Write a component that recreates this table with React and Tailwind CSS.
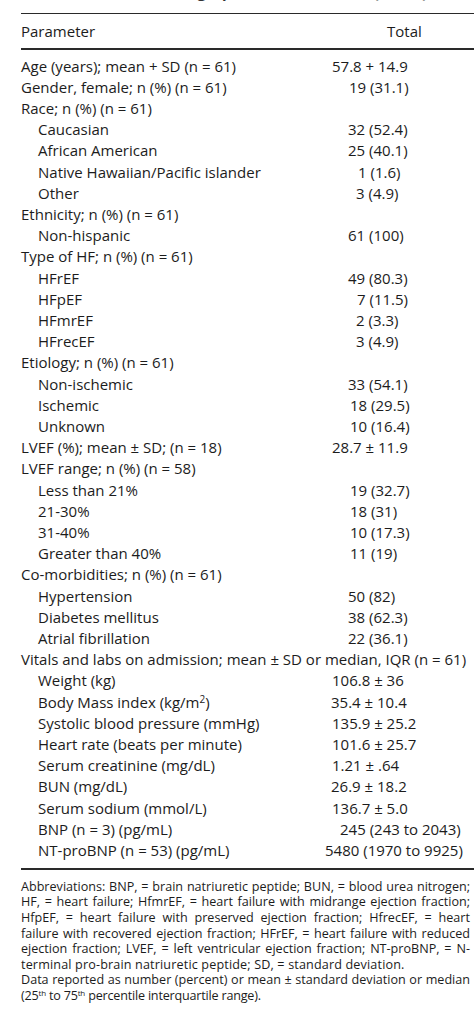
const rows = [
  { label: 'Age (years); mean + SD (n = 61)', value: '57.8 + 14.9', pad: 'pl-[32px]' },
  { label: 'Gender, female; n (%) (n = 61)', value: '19 (31.1)', pad: 'pl-[49px]' },
  { label: 'Race; n (%) (n = 61)' },
  { label: 'Caucasian', sub: true, value: '32 (52.4)', pad: 'pl-[48px]' },
  { label: 'African American', sub: true, value: '25 (40.1)', pad: 'pl-[48px]' },
  { label: 'Native Hawaiian/Pacific islander', sub: true, value: '1 (1.6)', pad: 'pl-[58px]' },
  { label: 'Other', sub: true, value: '3 (4.9)', pad: 'pl-[56px]' },
  { label: 'Ethnicity; n (%) (n = 61)' },
  { label: 'Non-hispanic', sub: true, value: '61 (100)', pad: 'pl-[48px]' },
  { label: 'Type of HF; n (%) (n = 61)' },
  { label: 'HFrEF', sub: true, value: '49 (80.3)', pad: 'pl-[48px]' },
  { label: 'HFpEF', sub: true, value: '7 (11.5)', pad: 'pl-[57px]' },
  { label: 'HFmrEF', sub: true, value: '2 (3.3)', pad: 'pl-[56px]' },
  { label: 'HFrecEF', sub: true, value: '3 (4.9)', pad: 'pl-[56px]' },
  { label: 'Etiology; n (%) (n = 61)' },
  { label: 'Non-ischemic', sub: true, value: '33 (54.1)', pad: 'pl-[48px]' },
  { label: 'Ischemic', sub: true, value: '18 (29.5)', pad: 'pl-[50px]' },
  { label: 'Unknown', sub: true, value: '10 (16.4)', pad: 'pl-[50px]' },
  { label: 'LVEF (%); mean ± SD; (n = 18)', value: '28.7 ± 11.9', pad: 'pl-[32px]' },
  { label: 'LVEF range; n (%) (n = 58)' },
  { label: 'Less than 21%', sub: true, value: '19 (32.7)', pad: 'pl-[50px]' },
  { label: '21-30%', sub: true, value: '18 (31)', pad: 'pl-[50px]' },
  { label: '31-40%', sub: true, value: '10 (17.3)', pad: 'pl-[50px]' },
  { label: 'Greater than 40%', sub: true, value: '11 (19)', pad: 'pl-[50px]' },
  { label: 'Co-morbidities; n (%) (n = 61)' },
  { label: 'Hypertension', sub: true, value: '50 (82)', pad: 'pl-[48px]' },
  { label: 'Diabetes mellitus', sub: true, value: '38 (62.3)', pad: 'pl-[48px]' },
  { label: 'Atrial fibrillation', sub: true, value: '22 (36.1)', pad: 'pl-[48px]' },
  { label: 'Vitals and labs on admission; mean ± SD or median, IQR (n = 61)', wide: true },
  { label: 'Weight (kg)', sub: true, value: '106.8 ± 36', pad: 'pl-[32px]' },
  { label: 'Body Mass index (kg/m²)', sub: true, value: '35.4 ± 10.4', pad: 'pl-[31px]', sup: true },
  { label: 'Systolic blood pressure (mmHg)', sub: true, value: '135.9 ± 25.2', pad: 'pl-[32px]' },
  { label: 'Heart rate (beats per minute)', sub: true, value: '101.6 ± 25.7', pad: 'pl-[32px]' },
  { label: 'Serum creatinine (mg/dL)', sub: true, value: '1.21 ± .64', pad: 'pl-[32px]' },
  { label: 'BUN (mg/dL)', sub: true, value: '26.9 ± 18.2', pad: 'pl-[31px]' },
  { label: 'Serum sodium (mmol/L)', sub: true, value: '136.7 ± 5.0', pad: 'pl-[32px]' },
  { label: 'BNP (n = 3) (pg/mL)', sub: true, value: '245 (243 to 2043)', pad: 'pl-[40px]' },
  { label: 'NT-proBNP (n = 53) (pg/mL)', sub: true, value: '5480 (1970 to 9925)', pad: 'pl-[25px]' },
];

const notes = [
  { text: 'Abbreviations: BNP, = brain natriuretic peptide; BUN, = blood urea nitrogen;', justify: true },
  { text: 'HF, = heart failure; HfmrEF, = heart failure with midrange ejection fraction;', justify: true },
  { text: 'HfpEF, = heart failure with preserved ejection fraction; HfrecEF, = heart', justify: true },
  { text: 'failure with recovered ejection fraction; HFrEF, = heart failure with reduced', justify: true },
  { text: 'ejection fraction; LVEF, = left ventricular ejection fraction; NT-proBNP, = N-', justify: true },
  { text: 'terminal pro-brain natriuretic peptide; SD, = standard deviation.', extra: 'tracking-[0.15px]' },
  { text: 'Data reported as number (percent) or mean ± standard deviation or median', justify: true },
];

export default function App() {
  return (
    <div className="w-[474px] h-[1016px] overflow-hidden bg-white text-[#1c1c1c] font-['Open_Sans','Lato',sans-serif]">
      <div className="pl-[21px]">
        {/* caption, mostly cropped off the top */}
        <div className="-mt-[17px] pl-[4px] text-[15px] leading-[18px] font-bold whitespace-nowrap text-[#333]">
          Table 1. Baseline Demographic Characteristics (n = 61).
        </div>

        <div className="mt-[11.5px] h-[1.5px] bg-[#2a2a2a]" />
        <div className="flex h-[34px] items-center text-[15px]">
          <div className="w-[279px]">Parameter</div>
          <div className="pl-[87px]">Total</div>
        </div>
        <div className="h-[1.5px] bg-[#2a2a2a]" />

        <div className="pt-[6px] pb-[7px] text-[15px] leading-[21.2px]">
          {rows.map((r, i) => (
            <div key={i} className="flex whitespace-nowrap">
              <div className={`${r.wide ? 'w-auto' : 'w-[279px]'} ${r.sub ? 'pl-[17px]' : ''}`}>
                {r.sup ? (
                  <>Body Mass index (kg/m<sup className="text-[10px]">2</sup>)</>
                ) : (
                  r.label
                )}
              </div>
              {r.value && <div className={r.pad}>{r.value}</div>}
            </div>
          ))}
        </div>
        <div className="h-[1.5px] bg-[#2a2a2a]" />

        <div className="pt-[9px] pr-[4px] text-[12.6px] leading-[15.6px]">
          {notes.map((n, i) => (
            <div
              key={i}
              className={`whitespace-nowrap ${n.justify ? 'text-justify [text-align-last:justify]' : ''} ${n.extra || ''}`}
            >
              {n.text}
            </div>
          ))}
          <div className="whitespace-nowrap tracking-[-0.2px]">
            (25<sup className="text-[8px]">th</sup> to 75<sup className="text-[8px]">th</sup> percentile interquartile range).
          </div>
        </div>
      </div>
    </div>
  );
}
